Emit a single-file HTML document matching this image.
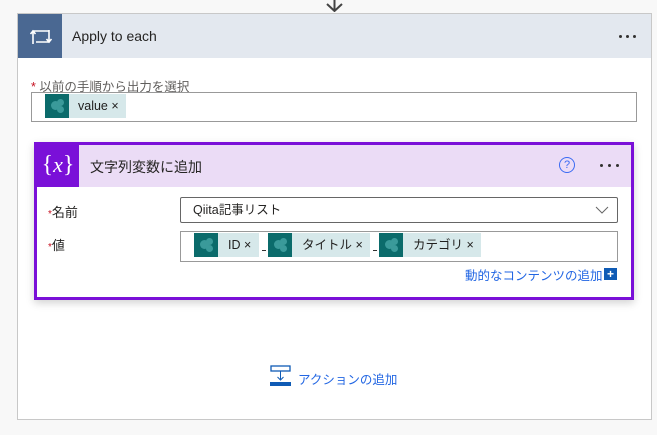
<!DOCTYPE html>
<html><head><meta charset="utf-8"><style>
*{margin:0;padding:0;box-sizing:border-box}
body{width:657px;height:435px;background:#f8f8f8;position:relative;overflow:hidden;font-family:"Liberation Sans","Noto Sans CJK JP",sans-serif;color:#252423}
.a{position:absolute}
.tok{position:absolute;height:24px;background:#d6e8ea;font-size:12.5px;line-height:24px;color:#201f1e;white-space:nowrap}
.tok .ic{position:absolute;left:0;top:0;width:24px;height:24px;background:#0b6b6b}
.tok .ic i{position:absolute;border-radius:50%;background:#3a9a9a}
.tok span{position:absolute;top:0}
.dot{position:absolute;width:3px;height:3px;background:#323130;border-radius:50%}
.req{color:#c50f1f}
.dash{position:absolute;width:4px;height:1px;background:#333}
</style></head><body>
<svg class="a" style="left:325px;top:0" width="19" height="12"><path d="M9.5 0V11M2 4L9.5 11L17 4" stroke="#444" stroke-width="2" fill="none"/></svg>
<div class="a" style="left:17px;top:13px;width:635px;height:407px;background:#fff;border:1px solid #c8c8c8"></div>
<div class="a" style="left:18px;top:14px;width:633px;height:44px;background:#e3e8ef"></div>
<div class="a" style="left:18px;top:14px;width:44px;height:44px;background:#4a6892"></div>
<svg class="a" style="left:29px;top:27px" width="24" height="19"><path d="M4 17V4H20M1.5 7L4 4L6.5 7M20 3V15H7M17.5 12L20 15L22.5 12" stroke="#fff" stroke-width="1.6" fill="none"/></svg>
<div class="a" style="left:72px;top:28px;font-size:14px">Apply to each</div>
<div class="dot" style="left:619px;top:35px"></div><div class="dot" style="left:626px;top:35px"></div><div class="dot" style="left:633px;top:35px"></div>
<div class="a" style="left:31px;top:76px;font-size:12.5px;color:#605e5c"><span class="req">*</span> 以前の手順から出力を選択</div>
<div class="a" style="left:31px;top:92px;width:606px;height:30px;border:1px solid #999"></div>
<div class="tok" style="left:45px;top:94px;width:81px"><div class="ic"><i style="left:6px;top:7px;width:9px;height:9px"></i><i style="left:12px;top:5px;width:7px;height:7px"></i><i style="left:12px;top:12px;width:7px;height:7px"></i></div><span style="left:33px">value ×</span></div>

<div class="a" style="left:34px;top:142px;width:600px;height:158px;background:#fff;border:3px solid #7a10d8;box-shadow:0 3px 8px rgba(0,0,0,.18)"></div>
<div class="a" style="left:37px;top:145px;width:594px;height:42px;background:#ebdcf6"></div>
<div class="a" style="left:37px;top:145px;width:42px;height:42px;background:#7a10d8;color:#fff;font-family:'Liberation Serif',serif;font-size:22px;line-height:40px;text-align:center"><span style="font-size:24px">{</span><i>x</i><span style="font-size:24px">}</span></div>
<div class="a" style="left:90px;top:157px;font-size:14px">文字列変数に追加</div>
<div class="a" style="left:559px;top:157px;width:16px;height:16px;border:1.3px solid #3b6bf3;border-radius:50%;color:#3b6bf3;font-size:11px;line-height:14px;text-align:center">?</div>
<div class="dot" style="left:600px;top:164px"></div><div class="dot" style="left:608px;top:164px"></div><div class="dot" style="left:616px;top:164px"></div>
<div class="a" style="left:48px;top:202px;font-size:13px"><span class="req" style="font-size:10px">*</span>名前</div>
<div class="a" style="left:180px;top:197px;width:438px;height:26px;border:1px solid #666;border-radius:2px;font-size:12.5px;line-height:24px;padding-left:12px">Qiita記事リスト</div>
<svg class="a" style="left:595px;top:206px" width="14" height="8"><path d="M1 1L7 7L13 1" stroke="#666" fill="none"/></svg>
<div class="a" style="left:48px;top:235px;font-size:13px"><span class="req" style="font-size:10px">*</span>値</div>
<div class="a" style="left:180px;top:231px;width:438px;height:31px;border:1px solid #999"></div>
<div class="tok" style="left:194px;top:233px;width:65px"><div class="ic"><i style="left:6px;top:7px;width:9px;height:9px"></i><i style="left:12px;top:5px;width:7px;height:7px"></i><i style="left:12px;top:12px;width:7px;height:7px"></i></div><span style="left:34px">ID ×</span></div>
<div class="dash" style="left:262px;top:250px"></div>
<div class="tok" style="left:268px;top:233px;width:102px"><div class="ic"><i style="left:6px;top:7px;width:9px;height:9px"></i><i style="left:12px;top:5px;width:7px;height:7px"></i><i style="left:12px;top:12px;width:7px;height:7px"></i></div><span style="left:34px">タイトル ×</span></div>
<div class="dash" style="left:373px;top:250px"></div>
<div class="tok" style="left:379px;top:233px;width:102px"><div class="ic"><i style="left:6px;top:7px;width:9px;height:9px"></i><i style="left:12px;top:5px;width:7px;height:7px"></i><i style="left:12px;top:12px;width:7px;height:7px"></i></div><span style="left:34px">カテゴリ ×</span></div>
<div class="a" style="left:465px;top:265px;font-size:12.5px;color:#2266e3">動的なコンテンツの追加</div>
<div class="a" style="left:604px;top:268px;width:13px;height:12px;background:#0f5bb5;color:#fff;font-size:12px;line-height:12px;text-align:center;font-weight:bold">+</div>
<svg class="a" style="left:270px;top:365px" width="22" height="22"><rect x="1" y="1" width="19" height="5" fill="none" stroke="#0f5bb5" stroke-width="1.3"/><path d="M10.5 6V15M7.5 12L10.5 15L13.5 12" stroke="#0f5bb5" fill="none"/><rect x="0" y="17" width="21" height="4" fill="#0f5bb5"/></svg>
<div class="a" style="left:298px;top:369px;font-size:12.5px;color:#2266e3">アクションの追加</div>
</body></html>
